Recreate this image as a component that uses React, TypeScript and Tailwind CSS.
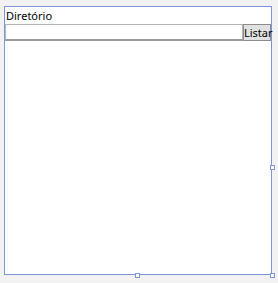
const App = () => {
  return (
    <div className="w-[278px] h-[283px] bg-[#f2f2f2] pt-[6px] pl-[4px] font-['Noto_Sans',sans-serif]">
      <div className="relative w-[268px] h-[269px] border border-[#7b96d9] bg-white flex flex-col">
        <div className="h-[17px] pl-[1px] text-[11px] leading-[17px] text-black">Diretório</div>
        <div className="flex h-[17px]">
          <div className="flex-1 border border-[#b4b4b4] border-b-2 border-b-[#9a9a9a] bg-white" />
          <button className="w-[28px] h-[17px] border border-[#8c8c8c] bg-[#e1e1e1] text-[11px] leading-[15px] text-black">
            Listar
          </button>
        </div>
        <div className="absolute right-[-4px] top-[158px] w-[5px] h-[5px] border border-[#7b96d9] bg-white" />
        <div className="absolute bottom-[-4px] left-[130px] w-[5px] h-[5px] border border-[#7b96d9] bg-white" />
        <div className="absolute bottom-[-4px] right-[-4px] w-[5px] h-[5px] border border-[#7b96d9] bg-white" />
      </div>
    </div>
  )
}

export default App
